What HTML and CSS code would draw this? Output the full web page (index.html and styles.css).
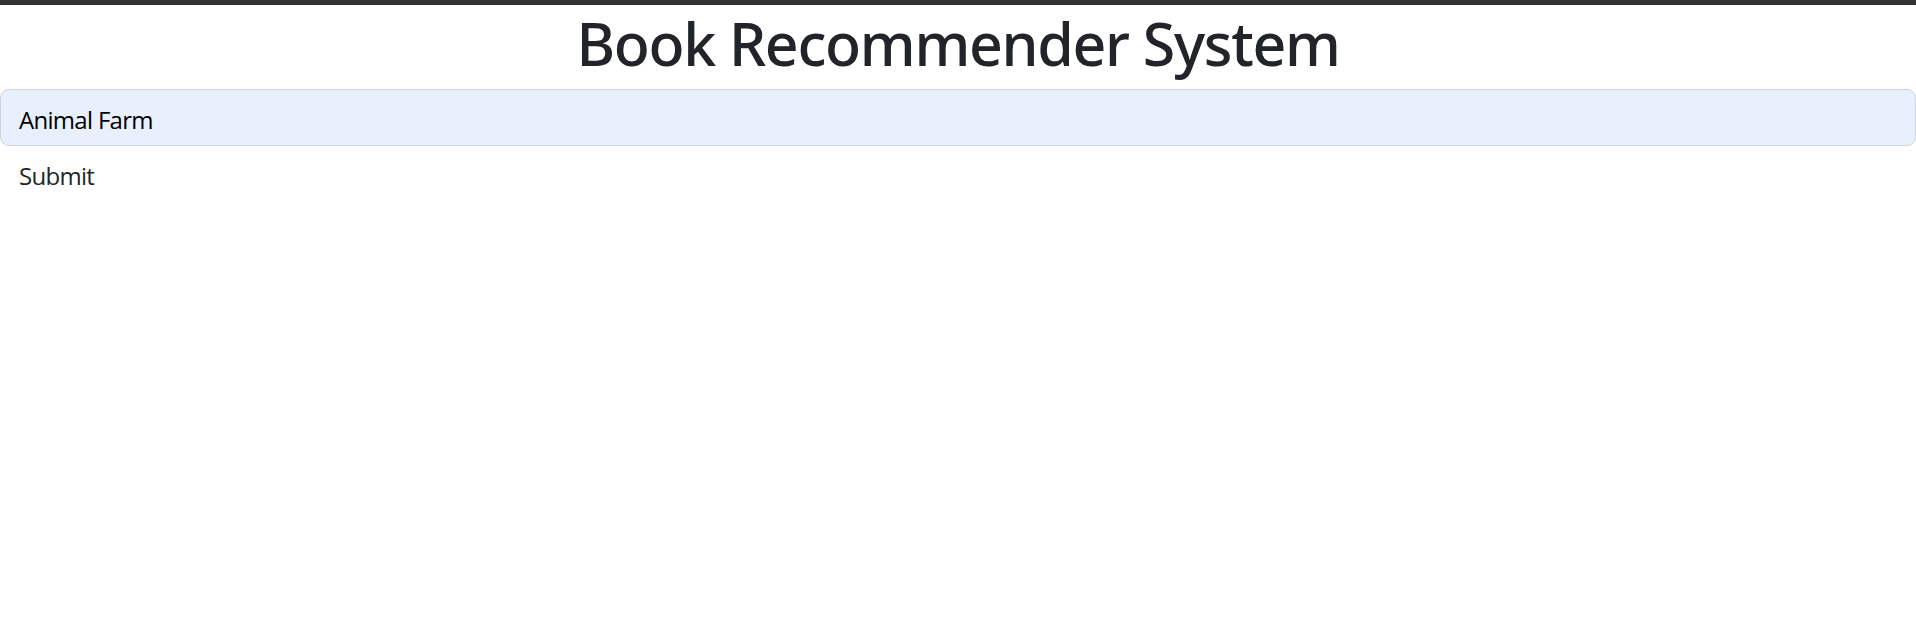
FILE: index.html
```html
<!DOCTYPE html>
<html lang="en">
<head>
<meta charset="utf-8">
<title>Book Recommender System</title>
<link rel="stylesheet" href="styles.css">
</head>
<body>
<div class="topbar"></div>
<h1 class="title">Book Recommender System</h1>
<form class="search-form">
  <input class="form-control" type="text" name="book" value="Animal Farm">
  <button class="btn" type="submit">Submit</button>
</form>
</body>
</html>
```
FILE: styles.css
```css
html, body {
  margin: 0;
  padding: 0;
  background: #fff;
}
body {
  font-family: "Open Sans", "Noto Sans", "Liberation Sans", sans-serif;
  color: #212529;
  font-size: 24px;
  line-height: 1.5;
}
.topbar {
  height: 5px;
  background: #333333;
}
.title {
  margin: 0 0 12px;
  padding-top: 5px;
  font-family: "Noto Sans", "Open Sans", sans-serif;
  font-size: 59px;
  font-weight: 500;
  line-height: 67px;
  letter-spacing: -1.3px;
  text-align: center;
  color: #212529;
}
.search-form {
  display: flex;
  flex-direction: column;
  align-items: flex-start;
}
.form-control {
  box-sizing: border-box;
  width: 100%;
  height: 57px;
  padding: 11px 18px 7px;
  font: inherit;
  letter-spacing: -0.7px;
  color: #000;
  background: #e8f0fe;
  border: 1.5px solid #ced4da;
  border-radius: 9px;
  outline: none;
}
.btn {
  padding: 11px 18px 7px;
  font: inherit;
  letter-spacing: -0.7px;
  color: #212529;
  background: transparent;
  border: 1.5px solid transparent;
  border-radius: 9px;
  cursor: pointer;
}
```
